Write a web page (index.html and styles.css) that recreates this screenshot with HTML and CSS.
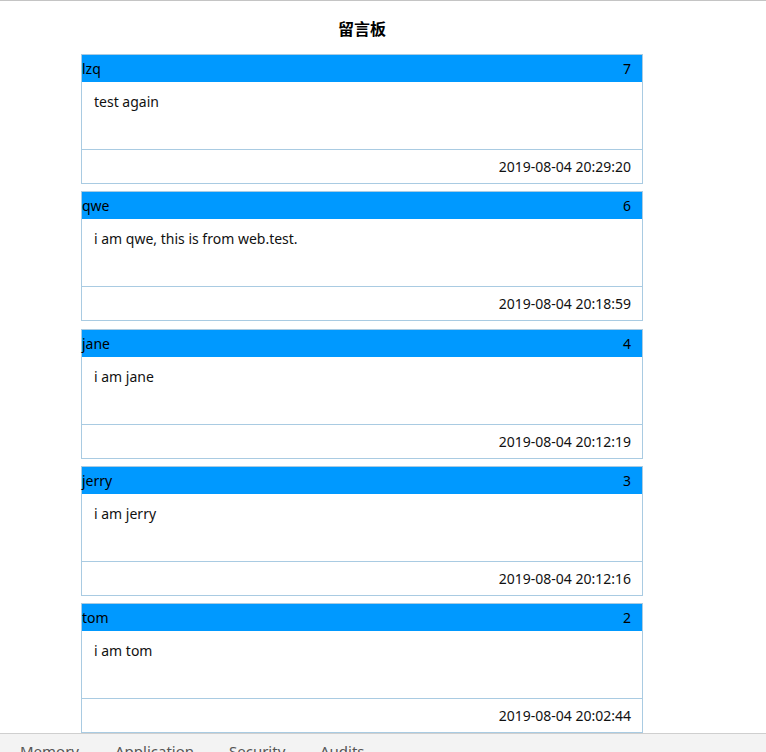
FILE: index.html
```html
<!DOCTYPE html>
<html lang="zh">
<head>
<meta charset="utf-8">
<title>留言板</title>
<link rel="stylesheet" href="styles.css">
</head>
<body>
<div class="page">
  <div class="viewport">
    <div class="container">
      <h1 class="title">留言板</h1>
      <div class="card">
        <div class="card-head"><span>lzq</span><span>7</span></div>
        <div class="card-body">test again</div>
        <div class="card-foot">2019-08-04 20:29:20</div>
      </div>
      <div class="card">
        <div class="card-head"><span>qwe</span><span>6</span></div>
        <div class="card-body">i am qwe, this is from web.test.</div>
        <div class="card-foot">2019-08-04 20:18:59</div>
      </div>
      <div class="card">
        <div class="card-head"><span>jane</span><span>4</span></div>
        <div class="card-body">i am jane</div>
        <div class="card-foot">2019-08-04 20:12:19</div>
      </div>
      <div class="card">
        <div class="card-head"><span>jerry</span><span>3</span></div>
        <div class="card-body">i am jerry</div>
        <div class="card-foot">2019-08-04 20:12:16</div>
      </div>
      <div class="card">
        <div class="card-head"><span>tom</span><span>2</span></div>
        <div class="card-body">i am tom</div>
        <div class="card-foot">2019-08-04 20:02:44</div>
      </div>
    </div>
  </div>
  <div class="devtools">
    <span class="tab t1">Memory</span>
    <span class="tab t2">Application</span>
    <span class="tab t3">Security</span>
    <span class="tab t4">Audits</span>
  </div>
</div>
</body>
</html>
```
FILE: styles.css
```css
html, body {
  margin: 0;
  padding: 0;
  background: #fff;
}
body {
  font-family: "Noto Sans", "Open Sans", "Noto Sans CJK SC", sans-serif;
  font-size: 14px;
  color: #111;
}
.page {
  height: 752px;
  display: flex;
  flex-direction: column;
  overflow: hidden;
}
.viewport {
  flex: 1;
  overflow: hidden;
  border-top: 1px solid #c4c4c4;
}
.container {
  width: 562px;
  margin-left: 81px;
}
.title {
  margin: 0;
  height: 53px;
  line-height: 54px;
  text-align: center;
  font-size: 16px;
  font-weight: bold;
  font-family: "Noto Sans CJK SC", sans-serif;
  color: #000;
}
.card {
  border: 1px solid #a9cbe2;
  margin-bottom: 7.25px;
}
.card-head {
  display: flex;
  justify-content: space-between;
  height: 27px;
  line-height: 27px;
  background: #0099ff;
  padding-right: 11px;
  color: #000;
}
.card-body {
  height: 68px;
  padding: 0 12px;
  line-height: 39px;
  box-sizing: border-box;
  border-bottom: 1px solid #a9cbe2;
}
.card-foot {
  height: 33px;
  line-height: 33px;
  text-align: right;
  padding-right: 11px;
}
.devtools {
  flex: none;
  height: 19px;
  box-sizing: border-box;
  background: #f3f3f3;
  border-top: 1px solid #cfcfcf;
  color: #555;
  font-size: 15px;
  line-height: 16px;
  display: flex;
  align-items: flex-start;
  padding-left: 20px;
  padding-top: 9px;
  overflow: hidden;
}
.tab {
  flex: none;
}
.t1 { width: 95px; }
.t2 { width: 114px; }
.t3 { width: 91px; }
```
